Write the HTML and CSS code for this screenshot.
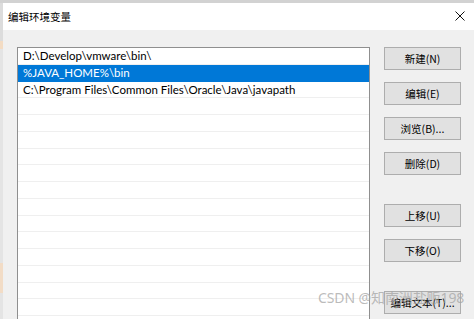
FILE: index.html
```html
<!DOCTYPE html>
<html>
<head>
<meta charset="utf-8">
<link rel="stylesheet" href="styles.css">
</head>
<body>
<div class="screen">
  <div class="backdrop"></div>
  <div class="dialog">
    <div class="titlebar">
      <span class="title">编辑环境变量</span>
      <svg class="close" width="10" height="10" viewBox="0 0 10 10"><path d="M0.5 0.5 L9.5 9.5 M9.5 0.5 L0.5 9.5" stroke="#111" stroke-width="1" fill="none"/></svg>
    </div>
    <div class="content">
      <div class="listbox">
        <div class="row">D:\Develop\vmware\bin\</div>
        <div class="row selected">%JAVA_HOME%\bin</div>
        <div class="row">C:\Program Files\Common Files\Oracle\Java\javapath</div>
        <div class="row"></div>
        <div class="row"></div>
        <div class="row"></div>
        <div class="row"></div>
        <div class="row"></div>
        <div class="row"></div>
        <div class="row"></div>
        <div class="row"></div>
        <div class="row"></div>
        <div class="row"></div>
        <div class="row"></div>
        <div class="row"></div>
        <div class="row"></div>
      </div>
      <div class="buttons">
        <div class="group">
          <button class="btn">新建(N)</button>
          <button class="btn">编辑(E)</button>
          <button class="btn">浏览(B)...</button>
          <button class="btn">删除(D)</button>
        </div>
        <div class="group">
          <button class="btn">上移(U)</button>
          <button class="btn">下移(O)</button>
        </div>
        <div class="group">
          <button class="btn">编辑文本(T)...</button>
        </div>
      </div>
    </div>
  </div>
  <div class="watermark">CSDN @知南洲盐贩198</div>
</div>
</body>
</html>
```
FILE: styles.css
```css
* { box-sizing: border-box; }
html, body {
  margin: 0;
  padding: 0;
  width: 474px;
  height: 319px;
  overflow: hidden;
  background: #f0f0f0;
  font-family: "Noto Sans", "Noto Sans CJK SC", sans-serif;
}
.screen {
  position: relative;
  display: flex;
  width: 474px;
  height: 319px;
  border-top: 3px solid #d2d2d2;
}
.backdrop {
  width: 3px;
  flex: none;
  background: linear-gradient(to bottom, #dcdcdc 0, #dcdcdc 38px, #f3dcc4 38px, #f3dcc4 46px, #e4e4e4 46px, #e4e4e4 260px, #f2dcc6 260px, #f2dcc6 290px, #e4e4e4 290px);
}
.dialog {
  flex: 1;
  display: flex;
  flex-direction: column;
  background: #f0f0f0;
}
.titlebar {
  height: 27px;
  flex: none;
  background: #ffffff;
  display: flex;
  align-items: center;
  justify-content: space-between;
  padding: 0 9px 0 5px;
}
.title {
  font-family: "Noto Sans CJK SC", sans-serif;
  font-size: 10.5px;
  color: #000;
  margin-top: -1px;
}
.close { display: block; margin-top: -2px; }
.content {
  flex: 1;
  display: flex;
  padding: 17px 13px 0 14px;
  gap: 14px;
}
.listbox {
  width: 353px;
  flex: none;
  border: 1px solid #8f8f8f;
  border-bottom: none;
  background: #fff;
  overflow: hidden;
}
.row {
  height: 16.75px;
  border-bottom: 1px solid #efefef;
  padding-left: 5px;
  font-family: "Lato", "Noto Sans", sans-serif;
  font-size: 11.5px;
  line-height: 15.5px;
  color: #000;
  white-space: nowrap;
}
.row.selected {
  background: #0078d7;
  color: #fff;
  border-bottom-color: #0078d7;
}
.buttons {
  width: 77px;
  flex: none;
  display: flex;
  flex-direction: column;
  gap: 29px;
}
.group {
  display: flex;
  flex-direction: column;
  gap: 12px;
}
.btn {
  height: 23px;
  width: 77px;
  padding: 0;
  margin: 0;
  background: #e1e1e1;
  border: 1px solid #adadad;
  font-family: "Noto Sans CJK SC", sans-serif;
  font-size: 10.5px;
  color: #000;
  line-height: 20px;
}
.watermark {
  position: absolute;
  left: 318px;
  top: 284px;
  font-family: "Noto Sans", "Noto Sans CJK SC", sans-serif;
  font-size: 14px;
  color: rgba(165, 165, 165, 0.75);
  white-space: nowrap;
  letter-spacing: -0.1px;
}
```
